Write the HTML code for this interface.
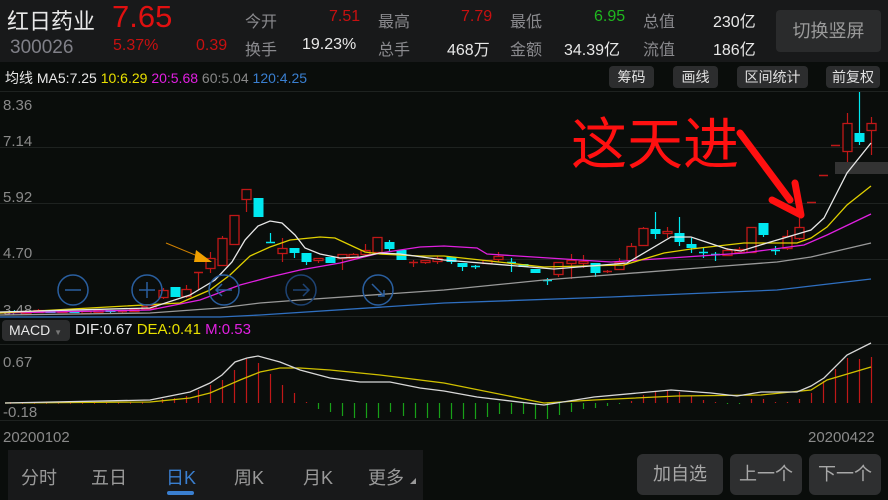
<!DOCTYPE html>
<html><head><meta charset="utf-8"><style>
*{margin:0;padding:0;box-sizing:border-box}
body{width:888px;height:500px;background:#0a0d0b;overflow:hidden;position:relative;font-family:"Liberation Sans","Noto Sans CJK SC",sans-serif}
.a{position:absolute;white-space:nowrap}
.g{color:#8a8a8e}.r{color:#e01010}.w{color:#e8e8e8}
.btn{position:absolute;background:#2c2d2e;border-radius:4px;color:#e0e0e0;font-size:14px;text-align:center}
.bb{position:absolute;background:#2e2f30;border-radius:6px;color:#a8a8a8;font-size:18px;text-align:center;top:454px;height:41px;line-height:41px}
</style></head><body>
<div class="a" style="left:0;top:0;width:888px;height:62px;background:#18191a"></div>
<div class="a w" style="left:7px;top:4px;font-size:22px">红日药业</div>
<div class="a r" style="left:112px;top:-1px;font-size:31px">7.65</div>
<div class="a g" style="left:10px;top:37px;font-size:19px;color:#808088">300026</div>
<div class="a r" style="left:113px;top:37px;font-size:16px;color:#c81010">5.37%</div>
<div class="a r" style="left:196px;top:37px;font-size:16px;color:#c81010">0.39</div>
<div class="a g" style="left:245px;top:8px;font-size:16px">今开</div>
<div class="a" style="left:329px;top:8px;font-size:16px;color:#c81010">7.51</div>
<div class="a g" style="left:378px;top:8px;font-size:16px">最高</div>
<div class="a" style="left:461px;top:8px;font-size:16px;color:#c81010">7.79</div>
<div class="a g" style="left:510px;top:8px;font-size:16px">最低</div>
<div class="a" style="left:594px;top:8px;font-size:16px;color:#1fb81f">6.95</div>
<div class="a g" style="left:643px;top:8px;font-size:16px">总值</div>
<div class="a w" style="left:713px;top:8px;font-size:16px">230亿</div>
<div class="a g" style="left:245px;top:36px;font-size:16px">换手</div>
<div class="a w" style="left:302px;top:36px;font-size:16px">19.23%</div>
<div class="a g" style="left:378px;top:36px;font-size:16px">总手</div>
<div class="a w" style="left:447px;top:36px;font-size:16px">468万</div>
<div class="a g" style="left:510px;top:36px;font-size:16px">金额</div>
<div class="a w" style="left:564px;top:36px;font-size:16px">34.39亿</div>
<div class="a g" style="left:643px;top:36px;font-size:16px">流值</div>
<div class="a w" style="left:713px;top:36px;font-size:16px">186亿</div>
<div class="a" style="left:776px;top:10px;width:105px;height:42px;background:#2a2b2c;border-radius:4px;color:#9a9a9a;font-size:18px;line-height:42px;text-align:center">切换竖屏</div>
<div class="a" style="left:5px;top:68px;font-size:14px;color:#e8e8e8">均线 MA5:7.25 <span style="color:#e8e000">10:6.29</span> <span style="color:#e020e0">20:5.68</span> <span style="color:#888">60:5.04</span> <span style="color:#3a7fd0">120:4.25</span></div>
<div class="btn" style="left:609px;top:66px;width:45px;height:22px;line-height:22px">筹码</div>
<div class="btn" style="left:673px;top:66px;width:45px;height:22px;line-height:22px">画线</div>
<div class="btn" style="left:737px;top:66px;width:71px;height:22px;line-height:22px">区间统计</div>
<div class="btn" style="left:826px;top:66px;width:54px;height:22px;line-height:22px">前复权</div>
<svg class="a" style="left:0;top:0" width="888" height="500" id="s">
<g stroke="#1e2220" stroke-width="1">
<line x1="0" y1="91.5" x2="888" y2="91.5"/><line x1="0" y1="147.5" x2="888" y2="147.5"/><line x1="0" y1="203.5" x2="888" y2="203.5"/><line x1="0" y1="259.5" x2="888" y2="259.5"/><line x1="0" y1="316.5" x2="888" y2="316.5"/><line x1="0" y1="344.5" x2="888" y2="344.5"/><line x1="0" y1="420.5" x2="888" y2="420.5"/>
</g>
<g font-size="15" fill="#8a8a8a" font-family="Liberation Sans">
<text x="3" y="110">8.36</text><text x="3" y="146">7.14</text><text x="3" y="202">5.92</text><text x="3" y="258">4.70</text><text x="3" y="315">3.48</text>
<text x="3" y="367">0.67</text><text x="3" y="417">-0.18</text><text x="3" y="442">20200102</text><text x="808" y="442">20200422</text>
</g>
<g id="c"></g>
<g fill="none" stroke="#2a5fa0" stroke-width="1.5">
<circle cx="73" cy="290" r="15"/><circle cx="147" cy="290" r="15"/><circle cx="224" cy="290" r="15"/><circle cx="301" cy="290" r="15" stroke="#1e4475"/><circle cx="378" cy="290" r="15"/>
<line x1="65" y1="290" x2="81" y2="290"/><line x1="139" y1="290" x2="155" y2="290"/><line x1="147" y1="282" x2="147" y2="298"/>
<path d="M232 290H216M222 284l-6 6 6 6"/><path d="M293 290H309M303 284l6 6-6 6" stroke="#1e4475"/><path d="M372 284l12 12M378 296h6v-6"/>
</g>
<line x1="166" y1="243" x2="200" y2="257" stroke="#d08000" stroke-width="1"/><polygon points="196,250 212,262 194,262" fill="#f0a000"/>
<text x="571" y="164" font-size="56" fill="#ff1010" font-family="Noto Sans CJK SC,sans-serif">这天进</text>
<line x1="740" y1="133" x2="790" y2="200" stroke="#ff1010" stroke-width="7" stroke-linecap="round"/><path d="M772 200L801 215L795 183" fill="none" stroke="#ff1010" stroke-width="7" stroke-linecap="round" stroke-linejoin="round"/>
</svg>
<div class="a" style="left:2px;top:320px;width:68px;height:21px;background:#2c2d2e;border-radius:4px;color:#e8e8e8;font-size:14px;line-height:21px;padding-left:7px">MACD <span style="font-size:8px;color:#777">▼</span></div>
<div class="a" style="left:75px;top:321px;font-size:15px;color:#e8e8e8">DIF:0.67 <span style="color:#e8e000">DEA:0.41</span> <span style="color:#e020e0">M:0.53</span></div>
<div class="a" style="left:8px;top:450px;width:415px;height:50px;background:#18191a"></div>
<div class="a" style="left:21px;top:464px;font-size:18px;color:#9a9a9a">分时</div>
<div class="a" style="left:91px;top:464px;font-size:18px;color:#9a9a9a">五日</div>
<div class="a" style="left:166px;top:464px;font-size:18px;color:#3a7fd0">日K</div>
<div class="a" style="left:167px;top:491px;width:27px;height:4px;background:#3a7fd0;border-radius:2px"></div>
<div class="a" style="left:234px;top:464px;font-size:18px;color:#9a9a9a">周K</div>
<div class="a" style="left:303px;top:464px;font-size:18px;color:#9a9a9a">月K</div>
<div class="a" style="left:368px;top:464px;font-size:18px;color:#9a9a9a">更多</div>
<div class="a" style="left:410px;top:478px;width:0;height:0;border-left:6px solid transparent;border-bottom:6px solid #999"></div>
<div class="bb" style="left:637px;width:86px">加自选</div>
<div class="bb" style="left:730px;width:72px">上一个</div>
<div class="bb" style="left:809px;width:72px">下一个</div>
<script>
var N='http://www.w3.org/2000/svg',g=document.getElementById('c');
function el(t,a){var e=document.createElementNS(N,t);for(var k in a)e.setAttribute(k,a[k]);g.appendChild(e);return e}
function pl(p,c,w){el('polyline',{points:p,fill:'none',stroke:c,'stroke-width':w||1.3})}
var C=[[14,311,313,310,313,'c'],[26,311,313,311,314,'r'],[38,310,312,309,313,'r'],[50,311,313,311,313,'c'],[62,310,312,310,313,'r'],[74,311,313,311,313,'c'],[86,311,313,311,313,'r'],[98,310,312,309,313,'r'],[110,310,312,310,313,'c'],[122,311,312,310,313,'r'],[134,309,311,309,312,'r'],[146,306,309,305,310,'r'],[151,305,308,304,309,'r'],
[163,290,297,288,299,'r'],[175,287,297,287,297,'c'],[186,289,296,285,298,'r'],[198,272,273,272,290,'r'],[210,258,268,252,273,'r'],[222,238,265,236,266,'r'],[234,215,244,215,244,'r'],[246,189,199,189,212,'r'],[258,198,217,198,217,'c'],[270,242,243,233,243,'c'],[282,248,253,238,262,'r'],[294,248,253,248,258,'c'],[306,253,262,253,265,'c'],[318,258,260,258,263,'r'],[330,257,263,257,263,'c'],[342,254,258,254,270,'r'],[353,254,258,253,260,'r'],[365,250,254,244,256,'r'],[377,237,252,237,252,'r'],[389,242,249,240,252,'c'],[401,250,260,250,260,'c'],[413,262,263,260,267,'r'],[425,260,262,260,264,'r'],[437,258,261,256,264,'r'],
[451,257,262,257,264,'c'],[462,263,267,263,271,'c'],[475,266,267,265,269,'c'],[487,260,263,260,264,'r'],[498,256,259,252,262,'r'],[511,262,263,258,272,'c'],[523,264,267,264,267,'c'],[535,269,273,269,273,'c'],[547,280,281,278,285,'c'],[558,262,274,262,277,'r'],[571,260,263,254,279,'r'],[583,261,263,255,268,'r'],[595,263,273,263,277,'c'],[607,271,272,270,273,'r'],[619,262,269,258,270,'r'],[631,246,260,243,260,'r'],[643,228,245,227,245,'r'],[655,229,234,212,239,'c'],[667,231,233,227,238,'r'],[679,233,242,217,246,'c'],[691,244,248,238,253,'c'],[703,252,253,247,258,'c'],[715,254,255,252,261,'c'],[727,250,255,248,256,'r'],[739,249,252,247,254,'r'],[751,227,252,227,252,'r'],[763,223,235,223,237,'c'],[775,250,251,246,255,'c'],[787,236,248,230,250,'r'],[799,227,238,218,240,'r'],[811,202,203,202,203,'r'],[823,175,176,175,176,'r'],[835,145,146,145,146,'r'],[847,123,151,113,162,'r'],[859,133,142,92,145,'c'],[871,123,130,117,155,'r']];
el('rect',{x:835,y:162,width:53,height:12,fill:'#333'});
C.forEach(function(c){var col=c[5]=='r'?'#c01818':'#00e8f0';
el('line',{x1:c[0]+.5,y1:c[3],x2:c[0]+.5,y2:c[4],stroke:col,'stroke-width':1.2});
if(c[2]-c[1]<2)el('line',{x1:c[0]-4,y1:c[1]+.5,x2:c[0]+5,y2:c[1]+.5,stroke:col,'stroke-width':1.5});
else if(c[5]=='r')el('rect',{x:c[0]-4,y:c[1]+.5,width:9,height:c[2]-c[1],fill:'#0a0d0b',stroke:col,'stroke-width':1.3});
else el('rect',{x:c[0]-4.5,y:c[1],width:10,height:c[2]-c[1],fill:col});});
pl('0,317 220,317 260,315 444,303 611,297 777,290 871,279','#2f6fc0');
pl('0,315 150,313 220,308 260,303 300,300 444,290 544,280 711,267 777,262 811,257 871,243','#999');
pl('0,313 150,310 200,300 240,285 270,277 300,270 340,263 380,253 420,247 444,246 477,248 487,254 611,262 744,253 804,245 827,235 871,214','#e020e0');
pl('0,313 180,303 210,290 230,275 250,256 270,247 290,240 320,237 335,238 350,245 365,252 380,254 420,256 444,256 544,267 624,265 664,253 691,249 744,243 797,243 811,238 827,227 847,205 871,186','#e0d000');
pl('0,312 150,308 190,295 215,280 232,262 245,240 258,226 270,221 282,223 295,235 305,248 320,254 340,258 360,257 380,253 400,254 444,260 554,269 627,263 671,237 691,237 727,249 741,251 767,243 811,230 824,218 847,173 871,143','#e8e8e8');
var B=[[150,403],[162,399],[174,398],[186,396],[198,390],[210,385],[222,380],[234,370],[246,359],[258,363],[270,374],[282,385],[294,393],[306,402],[318,409],[330,412],[342,416],[354,418],[366,418],[378,418],[390,412],[403,416],[415,418],[427,418],[439,418],[451,419],[463,419],[475,419],[487,417],[499,414],[511,414],[523,414],[535,419],[547,419],[559,415],[571,412],[583,409],[595,408],[607,406],[619,404],[631,401],[643,395],[655,392],[667,390],[679,392],[691,396],[703,400],[715,402],[727,404],[739,404],[751,399],[763,399],[775,402],[787,402],[799,399],[811,393],[823,381],[835,369],[847,358],[859,359],[871,357]];
for(var x=10;x<150;x+=12)el('line',{x1:x+.5,y1:402,x2:x+.5,y2:404,stroke:'#a01818'});
B.forEach(function(b){el('line',{x1:b[0]+.5,y1:403,x2:b[0]+.5,y2:b[1],stroke:b[1]<403?'#c01818':'#18a018','stroke-width':1.2})});
pl('5,403 150,402 190,398 210,393 240,380 260,372 280,368 300,368 330,370 380,375 444,383 544,403 594,400 677,396 761,395 811,390 827,380 871,367','#d0c000');
pl('5,403 150,400 170,396 190,392 210,383 222,375 235,362 247,358 258,356 280,362 300,370 330,378 360,382 390,382 420,388 444,391 477,397 544,405 594,397 671,390 711,393 737,396 761,392 797,392 811,386 824,378 847,355 871,343','#d8d8d8');
</script>
</body></html>
